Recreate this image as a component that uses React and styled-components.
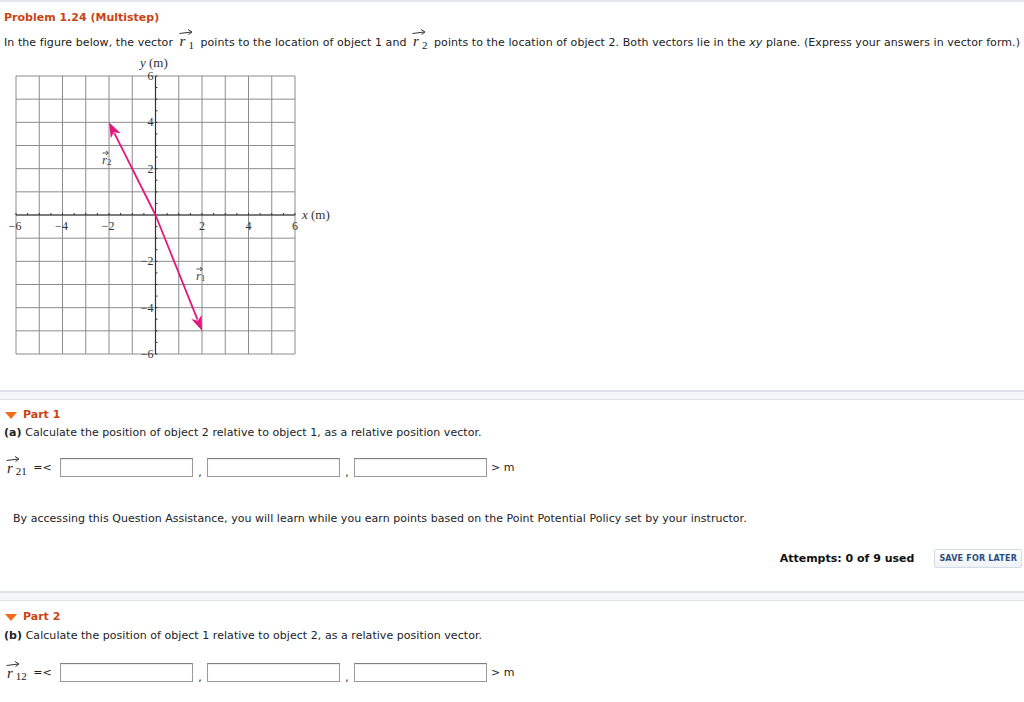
import React from "react";
import styled, { createGlobalStyle } from "styled-components";

const Global = createGlobalStyle`
  body {
    margin: 0;
    background: #fff;
    font-family: "DejaVu Sans", Verdana, sans-serif;
    color: #222;
  }
`;

const Page = styled.div`
  border-top: 2px solid #e3e7ee;
  padding: 0 4px;
  width: 1024px;
  box-sizing: border-box;
`;

const Title = styled.div`
  margin-top: 9px;
  font-size: 11px;
  line-height: 14px;
  font-weight: bold;
  color: #c94414;
`;

const Text = styled.div`
  margin-top: ${(p) => p.$top || 0}px;
  padding-left: ${(p) => p.$indent || 0}px;
  font-size: 11px;
  line-height: 14px;
  letter-spacing: ${(p) => p.$spacing || 0}px;
  color: #222;
  white-space: nowrap;
`;

const Vec = styled.span`
  position: relative;
  display: inline-block;
  font-family: "Liberation Serif", serif;
  font-style: italic;
  font-size: 15px;
  line-height: 14px;
  padding: 0 2px 0 3px;
  letter-spacing: 0;
`;

const VecArrow = styled.svg`
  position: absolute;
  left: 2px;
  top: -6px;
  width: 14px;
  height: 8px;
  overflow: visible;
`;

const Sub = styled.span`
  font-family: "Liberation Serif", serif;
  font-size: 11px;
  position: relative;
  top: 3px;
  margin: 0 3px 0 1px;
  letter-spacing: 0;
`;

const Figure = styled.div`
  margin-top: 2px;
  height: 310px;
`;

const Separator = styled.div`
  margin: ${(p) => p.$top}px -4px 0;
  height: 7px;
  border-top: 2px solid #dde2ea;
  border-bottom: 1px solid #dde2ea;
  background: #f3f6f9;
`;

const PartHead = styled.div`
  margin-top: ${(p) => p.$top}px;
  display: flex;
  align-items: center;
  gap: 6px;
  font-size: 11px;
  line-height: 14px;
  font-weight: bold;
  color: #c94414;
`;

const Triangle = styled.span`
  width: 0;
  height: 0;
  margin-left: 1px;
  border-left: 6px solid transparent;
  border-right: 6px solid transparent;
  border-top: 7px solid #f26a1b;
`;

const Label = styled.b`
  color: #222;
`;

const AnswerRow = styled.div`
  margin-top: ${(p) => p.$top}px;
  display: flex;
  align-items: center;
  font-size: 11px;
  height: 19px;
`;

const Lead = styled.span`
  display: inline-flex;
  align-items: center;
  width: 56px;
  white-space: nowrap;
`;

const Box = styled.input`
  width: 133px;
  height: 19px;
  box-sizing: border-box;
  border: 1px solid #9a9a9a;
  border-top-color: #7f7f7f;
  box-shadow: inset 0 1px 1px rgba(0, 0, 0, 0.08);
  padding: 0 3px;
  margin: 0;
  font-size: 11px;
`;

const Comma = styled.span`
  width: 14px;
  text-align: center;
  align-self: flex-end;
  line-height: 10px;
  position: relative;
  top: 1px;
`;

const Unit = styled.span`
  margin-left: 4px;
`;

const AttemptRow = styled.div`
  margin: 23px -2px 0 0;
  display: flex;
  justify-content: flex-end;
  align-items: center;
  gap: 20px;
  height: 19px;
`;

const Attempts = styled.span`
  font-size: 11px;
  font-weight: bold;
  color: #111;
`;

const SaveButton = styled.button`
  height: 19px;
  padding: 0 4px;
  border: 1px solid #d4dbe5;
  border-radius: 2px;
  background: linear-gradient(#ffffff, #eef2f6);
  color: #2c4c80;
  font-family: "DejaVu Sans", Verdana, sans-serif;
  font-size: 8px;
  font-weight: bold;
  letter-spacing: 0.2px;
`;

const ArrowMark = () => (
  <VecArrow viewBox="0 0 14 8">
    <line x1="0.5" y1="5.5" x2="12.5" y2="4" stroke="#333" strokeWidth="1" />
    <polyline points="9,1.5 13,4 9.5,6.5" fill="none" stroke="#333" strokeWidth="1" />
  </VecArrow>
);

const VectorSymbol = ({ sub }) => (
  <>
    <Vec>
      <ArrowMark />r
    </Vec>
    <Sub>{sub}</Sub>
  </>
);

// graph coordinates: page position minus the figure's top-left (4, 50)
const OX = 4;
const OY = 50;
const X0 = 16 - OX;
const X1 = 295 - OX;
const Y0 = 74 - OY;
const Y1 = 352 - OY;
const ux = (X1 - X0) / 12;
const uy = (Y1 - Y0) / 12;
const cx = X0 + 6 * ux;
const cy = Y0 + 6 * uy;
const px = (v) => cx + v * ux;
const py = (v) => cy - v * uy;

const Arrow = ({ x, y }) => {
  const ex = px(x);
  const ey = py(y);
  const dx = ex - cx;
  const dy = ey - cy;
  const len = Math.hypot(dx, dy);
  const ux1 = dx / len;
  const uy1 = dy / len;
  const hl = 15;
  const hw = 5.5;
  const bx = ex - ux1 * hl;
  const by = ey - uy1 * hl;
  const nx = bx + ux1 * 4;
  const ny = by + uy1 * 4;
  return (
    <g>
      <line x1={cx} y1={cy} x2={bx + ux1 * 3} y2={by + uy1 * 3} stroke="#e2187f" strokeWidth="1.8" />
      <polygon
        points={`${ex},${ey} ${bx - uy1 * hw},${by + ux1 * hw} ${nx},${ny} ${bx + uy1 * hw},${by - ux1 * hw}`}
        fill="#e2187f"
      />
    </g>
  );
};

const GraphLabel = ({ x, y, sub }) => (
  <g>
    <text x={x} y={y} style={{ fontFamily: "Liberation Serif, serif", fontSize: 13, fill: "#444" }}>
      <tspan fontStyle="italic">r</tspan>
      <tspan fontSize="9" dy="1">{sub}</tspan>
    </text>
    <line x1={x + 0.5} y1={y - 11} x2={x + 6} y2={y - 11} stroke="#444" strokeWidth="0.9" />
    <polyline points={`${x + 4},${y - 13} ${x + 6.5},${y - 11} ${x + 4},${y - 9}`} fill="none" stroke="#444" strokeWidth="0.9" />
  </g>
);

const Graph = () => {
  const lines = [];
  for (let i = 0; i <= 12; i++) {
    lines.push(<line key={"v" + i} x1={X0 + i * ux} y1={Y0} x2={X0 + i * ux} y2={Y1} stroke="#8c8c8c" strokeWidth="1" />);
    lines.push(<line key={"h" + i} x1={X0} y1={Y0 + i * uy} x2={X1} y2={Y0 + i * uy} stroke="#8c8c8c" strokeWidth="1" />);
  }
  const ticks = [];
  for (let i = -12; i <= 12; i++) {
    if (i === 0) continue;
    ticks.push(<line key={"tx" + i} x1={px(i / 2)} y1={cy - 2} x2={px(i / 2)} y2={cy} stroke="#333" strokeWidth="1" />);
    ticks.push(<line key={"ty" + i} x1={cx} y1={py(i / 2)} x2={cx + 2} y2={py(i / 2)} stroke="#333" strokeWidth="1" />);
  }
  const num = { fontFamily: "Liberation Serif, serif", fontSize: 12, fill: "#333" };
  return (
    <svg width="345" height="310" viewBox="0 0 345 310">
      {lines}
      <line x1={X0} y1={cy} x2={X1} y2={cy} stroke="#333" strokeWidth="1.2" />
      <line x1={cx} y1={Y0} x2={cx} y2={Y1} stroke="#333" strokeWidth="1.2" />
      {ticks}
      {[-6, -4, -2, 2, 4, 6].map((v) => (
        <text key={"lx" + v} x={px(v) + (v < 0 ? -1 : 0)} y={cy + 15} textAnchor="middle" style={num}>
          {v < 0 ? "\u2212" + -v : v}
        </text>
      ))}
      {[6, 4, 2, -2, -4, -6].map((v) => (
        <text key={"ly" + v} x={cx - 2} y={py(v) + 4} textAnchor="end" style={num}>
          {v < 0 ? "\u2212" + -v : v}
        </text>
      ))}
      <text x={140 - OX} y={65 - OY} style={{ fontFamily: "Liberation Serif, serif", fontSize: 13, fill: "#333" }}>
        <tspan fontStyle="italic">y</tspan> (m)
      </text>
      <text x={302 - OX} y={217 - OY} style={{ fontFamily: "Liberation Serif, serif", fontSize: 13, fill: "#333" }}>
        <tspan fontStyle="italic">x</tspan> (m)
      </text>
      <Arrow x={-2} y={4} />
      <Arrow x={2} y={-5} />
      <GraphLabel x={102 - OX} y={162 - OY} sub="2" />
      <GraphLabel x={196 - OX} y={278 - OY} sub="1" />
    </svg>
  );
};

const Answer = ({ sub, top }) => (
  <AnswerRow $top={top}>
    <Lead>
      <VectorSymbol sub={sub} />
      &nbsp;=&lt;
    </Lead>
    <Box />
    <Comma>,</Comma>
    <Box />
    <Comma>,</Comma>
    <Box />
    <Unit>&gt; m</Unit>
  </AnswerRow>
);

export default function App() {
  return (
    <Page>
      <Global />
      <Title>Problem 1.24 (Multistep)</Title>
      <Text $top={9} $spacing={0.075}>
        In the figure below, the vector <VectorSymbol sub="1" /> points to the location of object 1 and{" "}
        <VectorSymbol sub="2" /> points to the location of object 2. Both vectors lie in the <i>xy</i> plane. (Express
        your answers in vector form.)
      </Text>
      <Figure>
        <Graph />
      </Figure>
      <Separator $top={28} />
      <PartHead $top={8}>
        <Triangle />
        Part 1
      </PartHead>
      <Text $top={4} $spacing={0.05}>
        <Label>(a)</Label> Calculate the position of object 2 relative to object 1, as a relative position vector.
      </Text>
      <Answer sub="21" top={18} />
      <Text $top={35} $indent={9} $spacing={0.03}>
        By accessing this Question Assistance, you will learn while you earn points based on the Point Potential Policy
        set by your instructor.
      </Text>
      <AttemptRow>
        <Attempts>Attempts: 0 of 9 used</Attempts>
        <SaveButton>SAVE FOR LATER</SaveButton>
      </AttemptRow>
      <Separator $top={23} />
      <PartHead $top={9}>
        <Triangle />
        Part 2
      </PartHead>
      <Text $top={5} $spacing={0.05}>
        <Label>(b)</Label> Calculate the position of object 1 relative to object 2, as a relative position vector.
      </Text>
      <Answer sub="12" top={20} />
    </Page>
  );
}
